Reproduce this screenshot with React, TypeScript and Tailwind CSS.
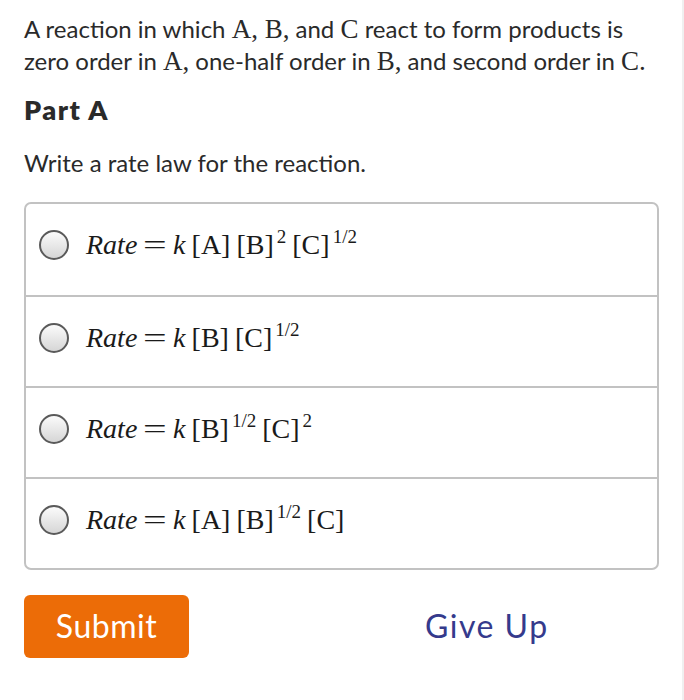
const sans = "font-['Lato','Open_Sans',sans-serif]";
const serif = "font-['Liberation_Serif','DejaVu_Serif',serif]";

function Br({ v, sup }: { v: string; sup?: string }) {
  return (
    <span className="mr-[6px] inline-flex items-start">
      <span>[{v}]</span>
      {sup && <span className="ml-[3px] -mt-[8px] text-[19px]">{sup}</span>}
    </span>
  );
}

function Radio() {
  return (
    <span className="h-[30px] w-[30px] shrink-0 rounded-full border-2 border-[#5a5a5a] bg-gradient-to-b from-[#fbfbfb] to-[#d6d6d6]" />
  );
}

type Term = { v: string; sup?: string };

const options: Term[][] = [
  [{ v: "A" }, { v: "B", sup: "2" }, { v: "C", sup: "1/2" }],
  [{ v: "B" }, { v: "C", sup: "1/2" }],
  [{ v: "B", sup: "1/2" }, { v: "C", sup: "2" }],
  [{ v: "A" }, { v: "B", sup: "1/2" }, { v: "C" }],
];

const m = `${serif} text-[27px]`;

export default function App() {
  return (
    <div className={`h-[700px] w-[684px] border-r-2 border-[#f0f0f0] bg-white px-6 pt-[13px] text-[#2a2a2a] ${sans}`}>
      <p className="whitespace-nowrap text-[24px] leading-[32px]">
        A reaction in which <span className={m}>A, B,</span> and <span className={m}>C</span> react to form products is
        <br />
        zero order in <span className={m}>A,</span> one-half order in <span className={m}>B,</span> and second order in{" "}
        <span className={m}>C.</span>
      </p>
      <h2 className="mt-[17px] text-[27px] font-extrabold leading-[32px] tracking-[1.5px]">Part A</h2>
      <p className="mt-[21px] text-[24px] leading-[32px]">Write a rate law for the reaction.</p>

      <div className="mt-[23px] w-[635px] overflow-hidden rounded-[7px] border-2 border-[#c2c2c2]">
        {options.map((terms, i) => (
          <div
            key={i}
            className={`flex h-[91px] items-start gap-[17px] pl-[13px] pt-[26px] ${i > 0 ? "border-t-2 border-[#c2c2c2]" : ""}`}
          >
            <Radio />
            <span className={`${serif} -mt-[1px] flex items-start text-[28px] leading-[32px] text-[#1a1a1a]`}>
              <span className="italic">Rate</span>
              <span className="mx-[10px] inline-block scale-x-150">=</span>
              <span className="mr-[6px] italic">k</span>
              {terms.map((t, j) => (
                <Br key={j} v={t.v} sup={t.sup} />
              ))}
            </span>
          </div>
        ))}
      </div>

      <div className="mt-[25px] flex items-center">
        <button className="h-[63px] w-[165px] rounded-[6px] bg-[#ec6c07] pb-[2px] text-[32px] tracking-[0.5px] text-white">
          Submit
        </button>
        <button className="ml-[236px] pb-[2px] text-[32px] tracking-[1.5px] text-[#353a8c]">Give Up</button>
      </div>
    </div>
  );
}
